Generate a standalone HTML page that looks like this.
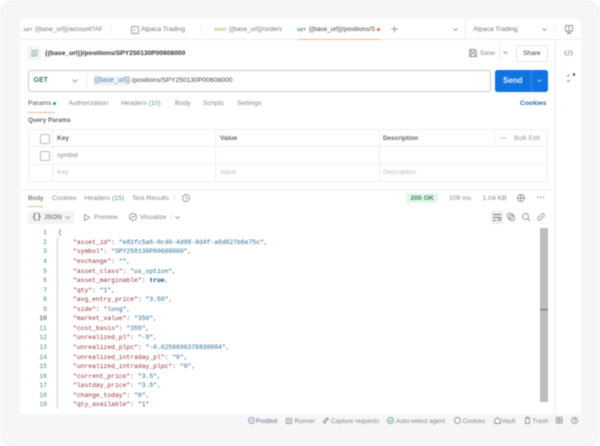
<!DOCTYPE html>
<html><head><meta charset="utf-8"><style>
*{box-sizing:border-box;margin:0;padding:0}
html,body{width:600px;height:446px;overflow:hidden;background:#fff}
body{font-family:"Liberation Sans",sans-serif;position:relative}
#w{position:absolute;inset:0;background:#f6f6f6;border-radius:12px;filter:blur(.5px)}
#m{position:absolute;left:20px;top:19px;width:561px;height:395px;background:#fff}
.t{position:absolute;white-space:nowrap;font-size:6.6px;line-height:10px;color:#777;margin-top:.8px}
.b{position:absolute;background:#ececec}
svg{position:absolute;overflow:visible;fill:none;stroke:#777;stroke-width:.7}
.c{position:absolute;left:73px;font:6.36px/9.55px "Liberation Mono",monospace;white-space:pre;color:#2a6a96;margin-top:.4px}
.c i{font-style:normal;color:#96343c}.c u{text-decoration:none;color:#555}.c b{color:#0f4c8a}
.n{position:absolute;left:30px;width:17px;text-align:right;font:6.36px/9.55px "Liberation Mono",monospace;color:#4a8588;margin-top:.4px}
</style></head><body><div id="w">
<div id="m"></div>
<div class="b" style="left:20px;top:39px;width:561px;height:1px"></div>
<div class="b" style="left:555px;top:39px;width:1px;height:375px"></div>
<div class="b" style="left:110px;top:25px;width:1px;height:9px"></div>
<div class="b" style="left:201px;top:25px;width:1px;height:9px"></div>
<div class="b" style="left:465px;top:19px;width:1px;height:20px"></div>
<div class="b" style="left:555px;top:25px;width:1px;height:9px"></div>

<div class="t" style="left:23.500px;top:24.500px;font-size:4.400px;color:#6e9f7c;font-weight:bold">GET</div>
<div class="t" style="left:35px;top:24px;width:67px;overflow:hidden;font-size:6.300px">{{base_url}}/account?API</div>
<svg style="left:131px;top:25.500px" width="8" height="8"><rect x=".5" y=".5" width="7" height="7" rx="1"/><path d="M2.500 4h2"/></svg>
<div class="t" style="left:141px;top:24px">Alpaca Trading</div>
<div class="t" style="left:214.500px;top:24.500px;font-size:4.400px;color:#c9a75d;font-weight:bold">POST</div>
<div class="t" style="left:229px;top:24px;font-size:6.400px">{{base_url}}/orders</div>
<div class="t" style="left:297px;top:24.500px;font-size:4.400px;color:#3f8a55;font-weight:bold">GET</div>
<div class="t" style="left:309px;top:24px;font-size:6.400px;color:#444">{{base_url}}/positions/S</div>
<div style="position:absolute;left:377px;top:27.500px;width:3px;height:3px;border-radius:50%;background:#e8673a"></div>
<div style="position:absolute;left:297px;top:39px;width:83px;height:1.200px;background:#f0b795"></div>
<svg style="left:391px;top:26px" width="7" height="7"><path d="M3.500 0v6.500M0 3.200h7"/></svg>
<svg style="left:453px;top:27.500px" width="5" height="3"><path d="M.5.5l2 2 2-2"/></svg>
<div class="t" style="left:473.500px;top:24px">Alpaca Trading</div>
<svg style="left:542px;top:27.500px" width="5" height="3"><path d="M.5.5l2 2 2-2"/></svg>
<svg style="left:564.500px;top:25px" width="8" height="9"><path d="M.5.5h7v5.500h-2v2.500h-3v-2.500h-2zM4 .5v8"/></svg>

<div style="position:absolute;left:27px;top:46px;width:14px;height:14px;background:#f3f5f6;border-radius:2px"></div>
<svg style="left:29.500px;top:49px;stroke:#8fbcb4;stroke-width:1" width="9" height="8"><path d="M1 1.500h7M1 3.500h7M1 5.500h7M1 7h6"/></svg>
<div class="t" style="left:45px;top:48px;font-size:6.650px;color:#333;font-weight:bold">{{base_url}}/positions/SPY250130P00608000</div>
<svg style="left:469px;top:49px" width="8" height="8"><path d="M.5.5h5.500l1.500 1.500v5.500h-7zM2 .5v2.500h3.500v-2.500M2 7.500v-3h4v3"/></svg>
<div class="t" style="left:480px;top:48px;color:#888">Save</div>
<div class="b" style="left:498.500px;top:45px;width:1px;height:15px"></div>
<svg style="left:503px;top:51px" width="5" height="3"><path d="M.5.5l2 2 2-2"/></svg>
<div style="position:absolute;left:516px;top:44.500px;width:31.500px;height:17px;border:1px solid #e6e6e6;border-radius:2px"></div>
<div class="t" style="left:523px;top:48px;color:#444">Share</div>
<svg style="left:564px;top:50px" width="9" height="6"><path d="M2.500.5L.5 3l2 2.500M6.500.5l2 2.500-2 2.500M5.200.3L3.800 5.700"/></svg>
<svg style="left:566px;top:74px" width="9" height="9"><path d="M1 2.500l1.500-1.500 1.500 1M4 6l-1.500 1.500L1 6.500" /></svg>
<div style="position:absolute;left:572.500px;top:73px;width:2.500px;height:2.500px;border-radius:50%;background:#555"></div>

<div style="position:absolute;left:27.500px;top:69.500px;width:463px;height:22px;border:1px solid #c9c9c9;border-radius:3px"></div>
<div class="t" style="left:33.500px;top:75.500px;font-size:7px;color:#3f7d58;font-weight:bold">GET</div>
<svg style="left:72px;top:79px" width="6" height="4"><path d="M.5.5l2.500 2.500 2.500-2.500"/></svg>
<div class="b" style="left:86px;top:73px;width:1px;height:15px"></div>
<div style="position:absolute;left:93px;top:76px;width:37px;height:10px;background:#f1f5f9;border-radius:1px"></div>
<div class="t" style="left:94.500px;top:75.500px;font-size:6.900px;color:#4d7fae">{{base_url}}</div>
<div class="t" style="left:131.500px;top:75.500px;font-size:6.750px;color:#444">/positions/SPY250130P00608000</div>
<div style="position:absolute;left:494.500px;top:69.500px;width:53px;height:22px;background:#0f74e0;border-radius:2.500px"></div>
<div class="b" style="left:530.500px;top:69.500px;width:1px;height:22px;background:#3c8de6"></div>
<div class="t" style="left:503px;top:75px;font-size:8px;color:#e8f2fd;font-weight:bold">Send</div>
<svg style="left:536.500px;top:79px;stroke:#d5e7fb" width="5" height="3"><path d="M.5.5l2 2 2-2"/></svg>

<div class="t" style="left:28px;top:98.500px;font-size:6.800px;color:#555">Params</div>
<div style="position:absolute;left:52.500px;top:102px;width:3px;height:3px;border-radius:50%;background:#2fa85a"></div>
<div style="position:absolute;left:28px;top:111.500px;width:27px;height:1.200px;background:#f0b795"></div>
<div class="t" style="left:68.500px;top:98.500px;font-size:6.800px;color:#888">Authorization</div>
<div class="t" style="left:121px;top:98.500px;font-size:6.800px;color:#888">Headers <span style="color:#5d9c74">(10)</span></div>
<div class="t" style="left:175px;top:98.500px;font-size:6.800px;color:#888">Body</div>
<div class="t" style="left:203px;top:98.500px;font-size:6.800px;color:#888">Scripts</div>
<div class="t" style="left:237px;top:98.500px;font-size:6.800px;color:#888">Settings</div>
<div class="t" style="left:520px;top:98.500px;font-size:6.800px;color:#2c6fa8;font-weight:bold">Cookies</div>
<div class="t" style="left:28px;top:115.500px;font-size:6.300px;color:#666;font-weight:bold">Query Params</div>

<div style="position:absolute;left:28px;top:129px;width:519.500px;height:53px;border:1px solid #eee"></div>
<div class="b" style="left:28px;top:146px;width:519.500px;height:1px;background:#eee"></div>
<div class="b" style="left:28px;top:164px;width:519.500px;height:1px;background:#eee"></div>
<div class="b" style="left:51.500px;top:129px;width:1px;height:53px;background:#eee"></div>
<div class="b" style="left:215px;top:129px;width:1px;height:53px;background:#eee"></div>
<div class="b" style="left:378.500px;top:129px;width:1px;height:53px;background:#eee"></div>
<div class="b" style="left:494px;top:129px;width:1px;height:17px;background:#eee"></div>
<div style="position:absolute;left:40px;top:133.500px;width:10px;height:10px;border:1px solid #bbb;border-radius:2px;background:#fff"></div>
<div style="position:absolute;left:40px;top:151px;width:10px;height:10px;border:1px solid #bbb;border-radius:2px;background:#fff"></div>
<div class="t" style="left:57px;top:133px;font-weight:bold;color:#666">Key</div>
<div class="t" style="left:220px;top:133px;font-weight:bold;color:#666">Value</div>
<div class="t" style="left:383px;top:133px;font-weight:bold;color:#666;font-size:6.400px">Description</div>
<div class="t" style="left:500px;top:133px;font-weight:bold;letter-spacing:.2px;color:#888">···</div>
<div class="t" style="left:514px;top:133px;color:#999">Bulk Edit</div>
<div class="t" style="left:57px;top:150.500px;color:#888">symbol</div>
<div class="t" style="left:57px;top:167.500px;color:#bbb">Key</div>
<div class="t" style="left:220px;top:167.500px;color:#bbb">Value</div>
<div class="t" style="left:383px;top:167.500px;color:#bbb">Description</div>

<div class="b" style="left:20px;top:189px;width:535px;height:1px"></div>
<div class="t" style="left:28px;top:193px;font-size:6.800px;color:#555">Body</div>
<div style="position:absolute;left:28px;top:206px;width:15px;height:1.200px;background:#f0b795"></div>
<div class="t" style="left:52px;top:193px;font-size:6.800px;color:#888">Cookies</div>
<div class="t" style="left:84.500px;top:193px;font-size:6.800px;color:#888">Headers <span style="color:#5d9c74">(15)</span></div>
<div class="t" style="left:132px;top:193px;font-size:6.800px;color:#888">Test Results</div>
<div class="b" style="left:174px;top:194px;width:1px;height:8px"></div>
<svg style="left:182px;top:194px" width="8" height="8"><circle cx="4" cy="4" r="3.500"/><path d="M4 2v2l1.500 1"/></svg>
<div style="position:absolute;left:406px;top:193px;width:32px;height:10px;background:#e4f6ea;border-radius:1px"></div>
<div class="t" style="left:410.500px;top:193px;font-size:6.800px;color:#3c8a5a;font-weight:bold">200 OK</div>
<div class="t" style="left:449px;top:193px;font-size:6.800px;color:#888">109 ms</div>
<div class="t" style="left:482.500px;top:193px;font-size:6.800px;color:#888">1.04 KB</div>
<svg style="left:517px;top:194px" width="9" height="8"><circle cx="4" cy="4" r="3.500"/><path d="M.5 4h7M4 .5v7"/></svg>
<div class="t" style="left:537px;top:192.500px;font-size:8px;font-weight:bold;color:#777">···</div>

<div style="position:absolute;left:28px;top:211px;width:46px;height:13px;background:#f3f3f3;border-radius:2px"></div>
<div class="t" style="left:32px;top:212px;font:8px/10px 'Liberation Mono',monospace;color:#444">{}</div>
<div class="t" style="left:44px;top:212px;font-size:6.600px;color:#555">JSON</div>
<svg style="left:65px;top:216px" width="5" height="3"><path d="M.5.5l2 2 2-2"/></svg>
<svg style="left:84px;top:213.500px" width="6" height="7"><path d="M.5.5l5 3-5 3z"/></svg>
<div class="t" style="left:94px;top:212px;color:#888">Preview</div>
<svg style="left:129px;top:213px" width="8" height="8"><circle cx="4" cy="4" r="3.500"/><path d="M2 5l4-2"/></svg>
<div class="t" style="left:140px;top:212px;color:#888">Visualize</div>
<div class="b" style="left:171px;top:213px;width:1px;height:8px"></div>
<svg style="left:175px;top:216px" width="5" height="3"><path d="M.5.5l2 2 2-2"/></svg>
<div style="position:absolute;left:490.500px;top:211px;width:12px;height:13px;background:#eee;border-radius:1px"></div>
<svg style="left:492.500px;top:213.500px;stroke:#555" width="8" height="8"><path d="M0 .5h8M0 3.500h7.500v2.500h-3M0 6.500h2.500"/></svg>
<svg style="left:507px;top:213px" width="8" height="8"><rect x=".5" y=".5" width="5" height="5" rx="1"/><rect x="2.500" y="2.500" width="5" height="5" rx="1"/></svg>
<svg style="left:522px;top:213px" width="8" height="8"><circle cx="3.500" cy="3.500" r="3"/><path d="M6 6l2 2"/></svg>
<svg style="left:537px;top:213px" width="8" height="8"><path d="M3.300 4.700l1.400-1.400M3 2.500l1.300-1.300a1.700 1.700 0 0 1 2.500 2.500L5.500 5M5 5.500L3.700 6.800a1.700 1.700 0 0 1-2.500-2.500L2.500 3"/></svg>

<div class="b" style="left:57px;top:237px;width:1px;height:172px;background:#cfcfcf"></div>
<div class="n" style="top:228px">1</div><div class="n" style="top:237.550px">2</div><div class="n" style="top:247.100px">3</div><div class="n" style="top:256.650px">4</div><div class="n" style="top:266.200px">5</div><div class="n" style="top:275.750px">6</div><div class="n" style="top:285.300px">7</div><div class="n" style="top:294.850px">8</div><div class="n" style="top:304.400px">9</div><div class="n" style="top:313.950px;color:#333">10</div><div class="n" style="top:323.500px">11</div><div class="n" style="top:333.050px">12</div><div class="n" style="top:342.600px">13</div><div class="n" style="top:352.150px">14</div><div class="n" style="top:361.700px">15</div><div class="n" style="top:371.250px">16</div><div class="n" style="top:380.800px">17</div><div class="n" style="top:390.350px">18</div><div class="n" style="top:399.900px">19</div>
<div class="c" style="left:58px;top:228px"><u>{</u></div>
<div class="c" style="top:237.550px"><i>"asset_id"</i><u>: </u>"e81fc5a6-0c40-4d99-8d4f-a0d627b6e75c"<u>,</u></div>
<div class="c" style="top:247.100px"><i>"symbol"</i><u>: </u>"SPY250130P00608000"<u>,</u></div>
<div class="c" style="top:256.650px"><i>"exchange"</i><u>: </u>""<u>,</u></div>
<div class="c" style="top:266.200px"><i>"asset_class"</i><u>: </u>"us_option"<u>,</u></div>
<div class="c" style="top:275.750px"><i>"asset_marginable"</i><u>: </u><b>true</b><u>,</u></div>
<div class="c" style="top:285.300px"><i>"qty"</i><u>: </u>"1"<u>,</u></div>
<div class="c" style="top:294.850px"><i>"avg_entry_price"</i><u>: </u>"3.59"<u>,</u></div>
<div class="c" style="top:304.400px"><i>"side"</i><u>: </u>"long"<u>,</u></div>
<div class="c" style="top:313.950px"><i>"market_value"</i><u>: </u>"350"<u>,</u></div>
<div class="c" style="top:323.500px"><i>"cost_basis"</i><u>: </u>"359"<u>,</u></div>
<div class="c" style="top:333.050px"><i>"unrealized_pl"</i><u>: </u>"-9"<u>,</u></div>
<div class="c" style="top:342.600px"><i>"unrealized_plpc"</i><u>: </u>"-0.0250696378830084"<u>,</u></div>
<div class="c" style="top:352.150px"><i>"unrealized_intraday_pl"</i><u>: </u>"0"<u>,</u></div>
<div class="c" style="top:361.700px"><i>"unrealized_intraday_plpc"</i><u>: </u>"0"<u>,</u></div>
<div class="c" style="top:371.250px"><i>"current_price"</i><u>: </u>"3.5"<u>,</u></div>
<div class="c" style="top:380.800px"><i>"lastday_price"</i><u>: </u>"3.5"<u>,</u></div>
<div class="c" style="top:390.350px"><i>"change_today"</i><u>: </u>"0"<u>,</u></div>
<div class="c" style="top:399.900px"><i>"qty_available"</i><u>: </u>"1"</div>

<div style="position:absolute;left:540px;top:228px;width:7.500px;height:174px;background:#bcbcbc"></div>
<div style="position:absolute;left:540px;top:309px;width:7.500px;height:1.200px;background:#666"></div>

<svg style="left:247.500px;top:417px;stroke:#8a6aa8" width="7" height="7"><circle cx="3.500" cy="3.500" r="3"/><path d="M2 3.500h3"/></svg>
<div class="t" style="left:256px;top:416px;color:#7d5d9c;font-size:6.300px">Postbot</div>
<svg style="left:286px;top:417.500px" width="6" height="6"><rect x=".5" y=".5" width="5" height="5" rx=".5"/><path d="M2.500 2l1 1-1 1"/></svg>
<div class="t" style="left:294.500px;top:416px;font-size:6.300px;color:#888">Runner</div>
<svg style="left:323px;top:417px" width="6" height="7"><circle cx="1.500" cy="5" r="1.200"/><circle cx="4" cy="2" r="1.200"/><path d="M2 4l1.500-1.500"/></svg>
<div class="t" style="left:331px;top:416px;font-size:6.300px;color:#888">Capture requests</div>
<svg style="left:387px;top:417px;stroke:#4e9a6a" width="7" height="7"><circle cx="3.500" cy="3.500" r="3"/><path d="M2 3.500l1 1 2-2"/></svg>
<div class="t" style="left:396px;top:416px;font-size:6.300px;color:#888">Auto-select agent</div>
<svg style="left:453.500px;top:417px" width="7" height="7"><circle cx="3.500" cy="3.500" r="3"/></svg>
<div class="t" style="left:462.500px;top:416px;font-size:6.300px;color:#888">Cookies</div>
<svg style="left:493.500px;top:417px" width="7" height="7"><path d="M.5 3l3-2.500 3 2.500v3.500h-6z"/></svg>
<div class="t" style="left:501.500px;top:416px;font-size:6.300px;color:#888">Vault</div>
<svg style="left:525px;top:417px" width="5" height="7"><path d="M.5 1h4v5.500h-4zM0 1h5M1.500.2h2"/></svg>
<div class="t" style="left:532.500px;top:416px;font-size:6.300px;color:#888">Trash</div>
<svg style="left:556px;top:417px" width="7" height="7"><rect x=".5" y=".5" width="5.500" height="5.500"/><path d="M3.200.5v5.500M.5 3.200h5.500"/></svg>
<svg style="left:570.500px;top:417px" width="7" height="7"><circle cx="3.500" cy="3.500" r="3"/><path d="M3.500 5v-1.200l.8-.8v-.8h-1.500"/></svg>
</div></body></html>
